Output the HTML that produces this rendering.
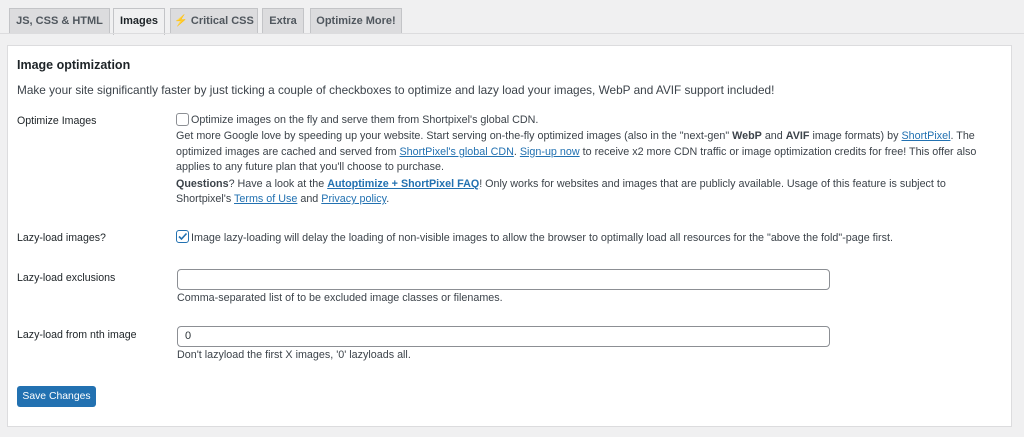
<!DOCTYPE html>
<html><head><meta charset="utf-8"><style>
body{margin:0;width:1024px;height:437px;background:#f0f0f1;font-family:"Liberation Sans",sans-serif;color:#3c434a;position:relative;overflow:hidden}
.a{position:absolute;white-space:nowrap}
.tab{position:absolute;top:8px;height:25px;background:#dcdcde;border:1px solid #c3c4c7;border-bottom:none;font-size:11px;font-weight:bold;color:#50575e;line-height:25px;text-align:center;box-sizing:border-box}
.tab.on{background:#f0f0f1;color:#1d2327;height:27px}
.panel{position:absolute;left:7px;top:45px;width:1005px;height:382px;background:#fff;border:1px solid #dcdcde;box-sizing:border-box}
.s{font-size:10.75px;line-height:16px;color:#3c434a}
a{color:#2271b1;text-decoration:underline}
.lbl{font-size:10.6px;color:#1d2327}
.cb{position:absolute;width:11px;height:11px;border:1px solid #8c8f94;border-radius:3px;background:#fff}
.inp{position:absolute;left:177px;width:653px;height:21px;border:1px solid #8c8f94;border-radius:4px;box-sizing:border-box;background:#fff;font-size:11px;line-height:19px;padding-left:7px;color:#2c3338}
</style></head><body>
<div class="tab" style="left:9px;width:101px">JS, CSS &amp; HTML</div>
<div class="tab on" style="left:113px;width:52px">Images</div>
<div class="tab" style="left:170px;width:88px"><span style="color:#f0c33c">⚡</span> Critical CSS</div>
<div class="tab" style="left:262px;width:42px">Extra</div>
<div class="tab" style="left:310px;width:92px">Optimize More!</div>
<div class="a" style="left:0;top:33px;width:1024px;border-top:1px solid #dcdcde"></div>
<div class="panel"></div>
<div class="a" style="left:17px;top:58px;font-size:12.5px;font-weight:bold;color:#1d2327">Image optimization</div>
<div class="a" style="left:17px;top:83px;font-size:11.8px;color:#3c434a">Make your site significantly faster by just ticking a couple of checkboxes to optimize and lazy load your images, WebP and AVIF support included!</div>
<div class="a lbl" style="left:17px;top:115px">Optimize Images</div>
<div class="cb" style="left:176px;top:113px"></div>
<div class="a s" style="left:191px;top:112px">Optimize images on the fly and serve them from Shortpixel's global CDN.</div>
<div class="a s" style="left:176px;top:128px">Get more Google love by speeding up your website. Start serving on-the-fly optimized images (also in the "next-gen" <b>WebP</b> and <b>AVIF</b> image formats) by <a>ShortPixel</a>. The</div>
<div class="a s" style="left:176px;top:144px">optimized images are cached and served from <a>ShortPixel's global CDN</a>. <a>Sign-up now</a> to receive x2 more CDN traffic or image optimization credits for free! This offer also</div>
<div class="a s" style="left:176px;top:159px">applies to any future plan that you'll choose to purchase.</div>
<div class="a s" style="left:176px;top:176px"><b>Questions</b>? Have a look at the <a><b>Autoptimize + ShortPixel FAQ</b></a>! Only works for websites and images that are publicly available. Usage of this feature is subject to</div>
<div class="a s" style="left:176px;top:191px">Shortpixel's <a>Terms of Use</a> and <a>Privacy policy</a>.</div>
<div class="a lbl" style="left:17px;top:232px">Lazy-load images?</div>
<div class="cb" style="left:176px;top:230px;border-color:#2271b1"><svg width="11" height="11" viewBox="0 0 11 11" style="position:absolute;left:0;top:0"><path d="M2 5.5L4.5 8L9.5 2.5" fill="none" stroke="#2271b1" stroke-width="1.6"/></svg></div>
<div class="a s" style="left:191px;top:230px">Image lazy-loading will delay the loading of non-visible images to allow the browser to optimally load all resources for the "above the fold"-page first.</div>
<div class="a lbl" style="left:17px;top:272px">Lazy-load exclusions</div>
<div class="inp" style="top:269px"></div>
<div class="a s" style="left:177px;top:290px">Comma-separated list of to be excluded image classes or filenames.</div>
<div class="a lbl" style="left:17px;top:329px">Lazy-load from nth image</div>
<div class="inp" style="top:326px">0</div>
<div class="a s" style="left:177px;top:347px">Don't lazyload the first X images, '0' lazyloads all.</div>
<div class="a" style="left:17px;top:386px;width:79px;height:21px;background:#2271b1;border-radius:3px;color:#fff;font-size:10.4px;line-height:21px;text-align:center">Save Changes</div>
</body></html>
